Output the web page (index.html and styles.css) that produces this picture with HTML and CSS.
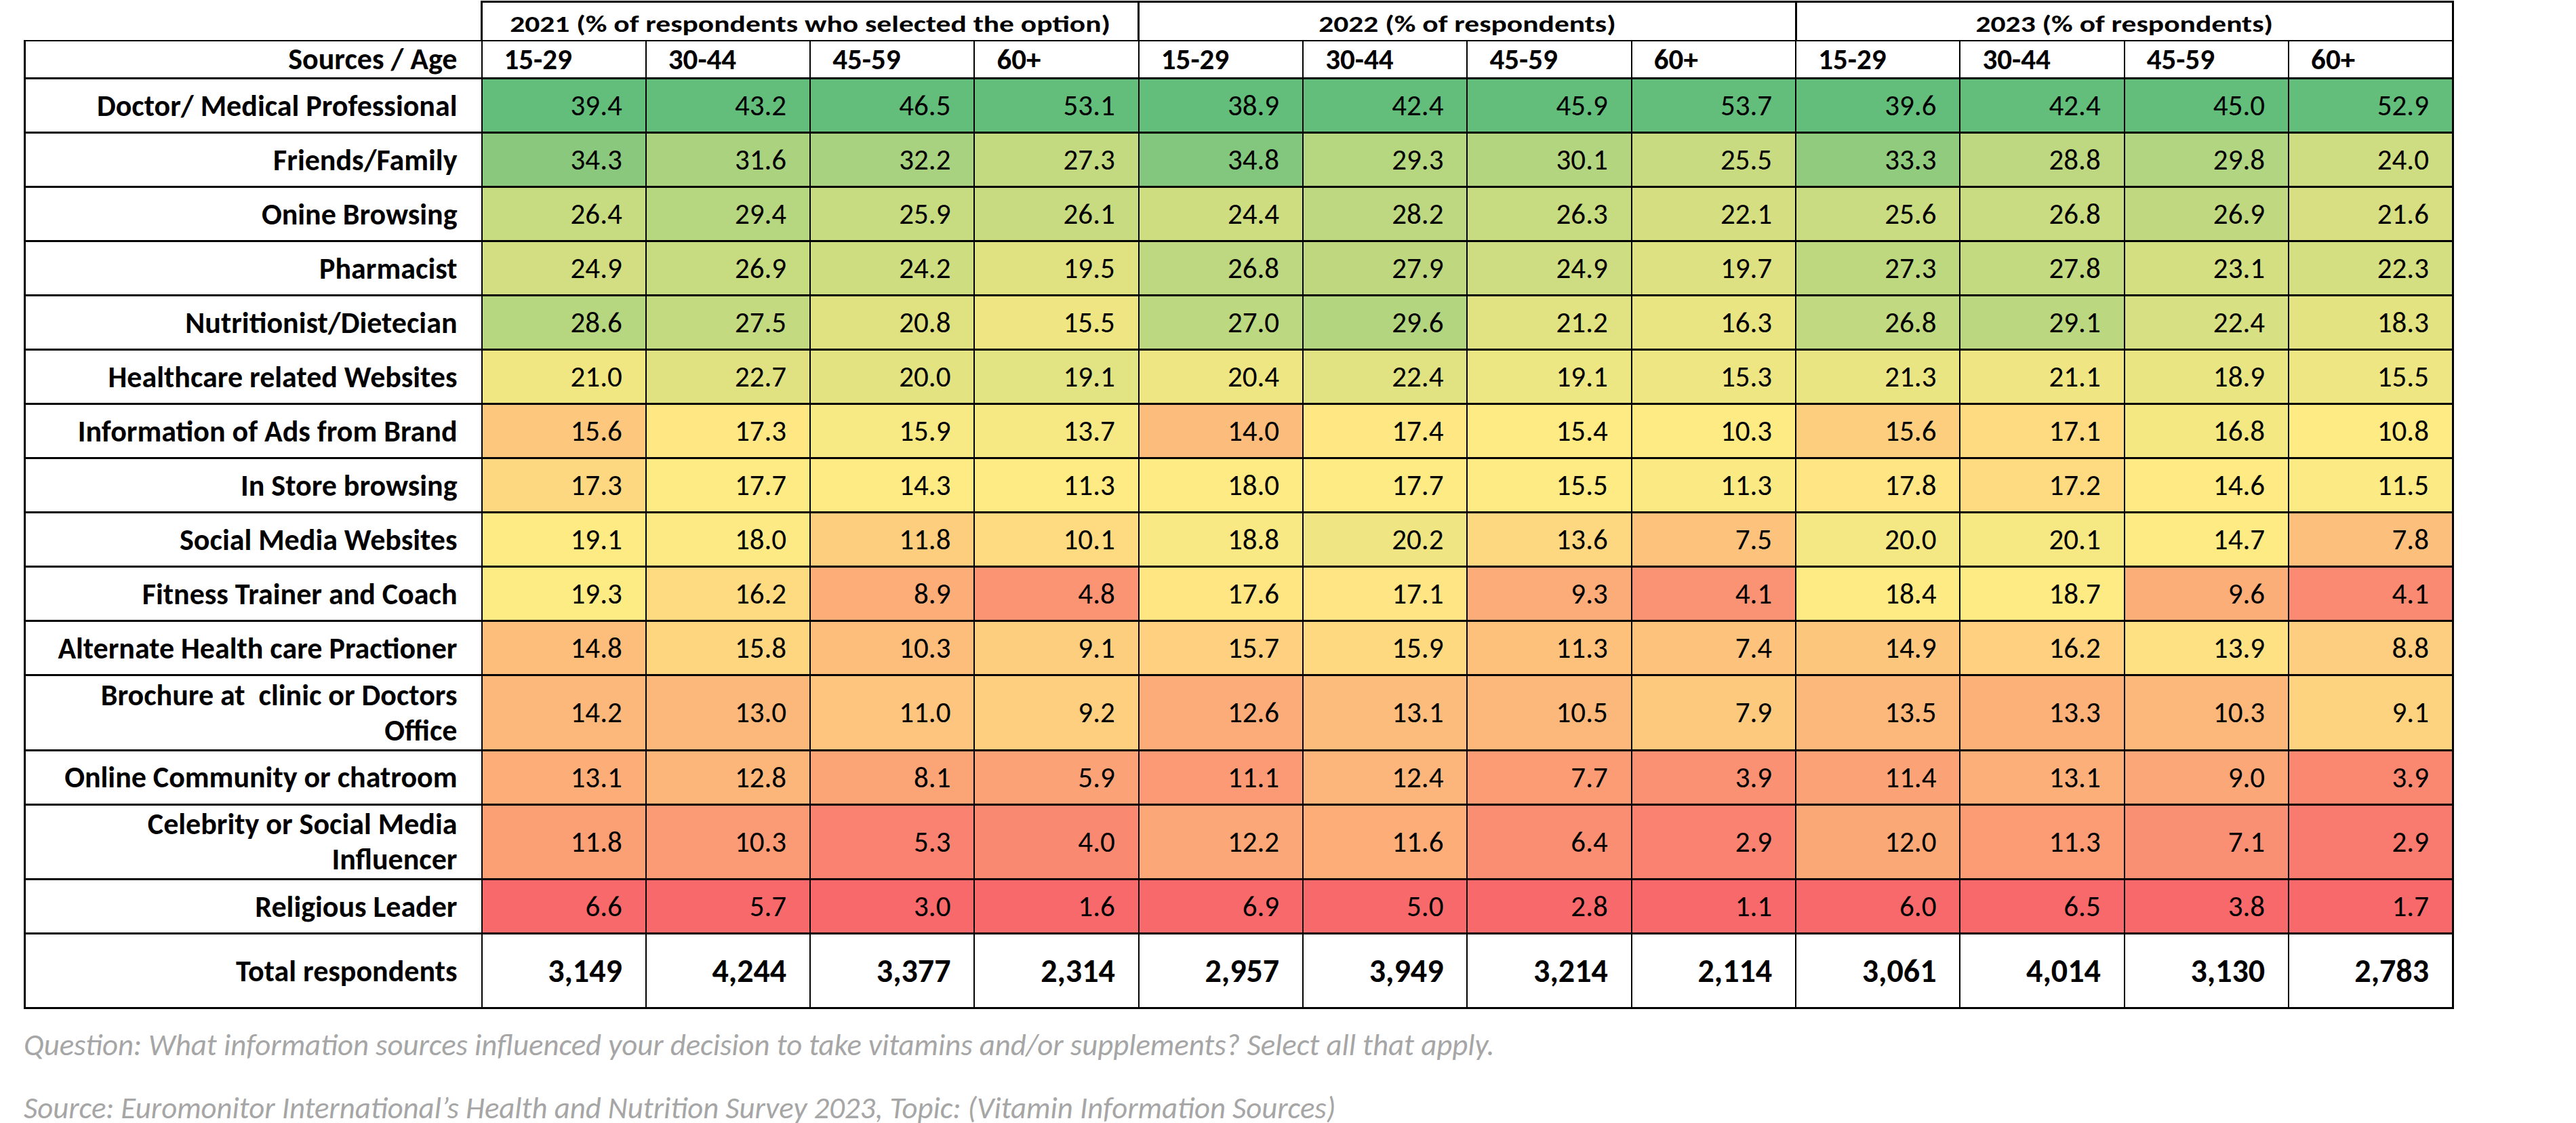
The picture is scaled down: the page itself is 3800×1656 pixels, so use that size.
FILE: index.html
```html
<!DOCTYPE html>
<html lang="en">
<head>
<meta charset="utf-8">
<title>Vitamin Information Sources</title>
<link rel="stylesheet" href="styles.css">
</head>
<body>
<div class="sheet">
  <table class="grid">
    <colgroup>
      <col class="c-lbl">
      <col><col><col><col>
      <col><col><col><col>
      <col><col><col><col>
    </colgroup>
    <thead>
      <tr class="yr">
        <th class="blank"></th>
        <th class="year" colspan="4"><span class="yt">2021 (% of respondents who selected the option)</span></th>
        <th class="year" colspan="4"><span class="yt">2022 (% of respondents)</span></th>
        <th class="year" colspan="4"><span class="yt">2023 (% of respondents)</span></th>
      </tr>
      <tr class="ages">
        <th class="lbl">Sources / Age</th>
        <th>15-29</th><th>30-44</th><th>45-59</th><th>60+</th>
        <th>15-29</th><th>30-44</th><th>45-59</th><th>60+</th>
        <th>15-29</th><th>30-44</th><th>45-59</th><th>60+</th>
      </tr>
    </thead>
    <tbody>
      <tr class="r"><th class="lbl">Doctor/ Medical Professional</th>
        <td class="v">39.4</td><td class="v">43.2</td><td class="v">46.5</td><td class="v">53.1</td>
        <td class="v">38.9</td><td class="v">42.4</td><td class="v">45.9</td><td class="v">53.7</td>
        <td class="v">39.6</td><td class="v">42.4</td><td class="v">45.0</td><td class="v">52.9</td></tr>
      <tr class="r"><th class="lbl">Friends/Family</th>
        <td class="v">34.3</td><td class="v">31.6</td><td class="v">32.2</td><td class="v">27.3</td>
        <td class="v">34.8</td><td class="v">29.3</td><td class="v">30.1</td><td class="v">25.5</td>
        <td class="v">33.3</td><td class="v">28.8</td><td class="v">29.8</td><td class="v">24.0</td></tr>
      <tr class="r"><th class="lbl">Onine Browsing</th>
        <td class="v">26.4</td><td class="v">29.4</td><td class="v">25.9</td><td class="v">26.1</td>
        <td class="v">24.4</td><td class="v">28.2</td><td class="v">26.3</td><td class="v">22.1</td>
        <td class="v">25.6</td><td class="v">26.8</td><td class="v">26.9</td><td class="v">21.6</td></tr>
      <tr class="r"><th class="lbl">Pharmacist</th>
        <td class="v">24.9</td><td class="v">26.9</td><td class="v">24.2</td><td class="v">19.5</td>
        <td class="v">26.8</td><td class="v">27.9</td><td class="v">24.9</td><td class="v">19.7</td>
        <td class="v">27.3</td><td class="v">27.8</td><td class="v">23.1</td><td class="v">22.3</td></tr>
      <tr class="r"><th class="lbl">Nutritionist/Dietecian</th>
        <td class="v">28.6</td><td class="v">27.5</td><td class="v">20.8</td><td class="v">15.5</td>
        <td class="v">27.0</td><td class="v">29.6</td><td class="v">21.2</td><td class="v">16.3</td>
        <td class="v">26.8</td><td class="v">29.1</td><td class="v">22.4</td><td class="v">18.3</td></tr>
      <tr class="r"><th class="lbl">Healthcare related Websites</th>
        <td class="v">21.0</td><td class="v">22.7</td><td class="v">20.0</td><td class="v">19.1</td>
        <td class="v">20.4</td><td class="v">22.4</td><td class="v">19.1</td><td class="v">15.3</td>
        <td class="v">21.3</td><td class="v">21.1</td><td class="v">18.9</td><td class="v">15.5</td></tr>
      <tr class="r"><th class="lbl">Information of Ads from Brand</th>
        <td class="v">15.6</td><td class="v">17.3</td><td class="v">15.9</td><td class="v">13.7</td>
        <td class="v">14.0</td><td class="v">17.4</td><td class="v">15.4</td><td class="v">10.3</td>
        <td class="v">15.6</td><td class="v">17.1</td><td class="v">16.8</td><td class="v">10.8</td></tr>
      <tr class="r"><th class="lbl">In Store browsing</th>
        <td class="v">17.3</td><td class="v">17.7</td><td class="v">14.3</td><td class="v">11.3</td>
        <td class="v">18.0</td><td class="v">17.7</td><td class="v">15.5</td><td class="v">11.3</td>
        <td class="v">17.8</td><td class="v">17.2</td><td class="v">14.6</td><td class="v">11.5</td></tr>
      <tr class="r"><th class="lbl">Social Media Websites</th>
        <td class="v">19.1</td><td class="v">18.0</td><td class="v">11.8</td><td class="v">10.1</td>
        <td class="v">18.8</td><td class="v">20.2</td><td class="v">13.6</td><td class="v">7.5</td>
        <td class="v">20.0</td><td class="v">20.1</td><td class="v">14.7</td><td class="v">7.8</td></tr>
      <tr class="r"><th class="lbl">Fitness Trainer and Coach</th>
        <td class="v">19.3</td><td class="v">16.2</td><td class="v">8.9</td><td class="v">4.8</td>
        <td class="v">17.6</td><td class="v">17.1</td><td class="v">9.3</td><td class="v">4.1</td>
        <td class="v">18.4</td><td class="v">18.7</td><td class="v">9.6</td><td class="v">4.1</td></tr>
      <tr class="r"><th class="lbl">Alternate Health care Practioner</th>
        <td class="v">14.8</td><td class="v">15.8</td><td class="v">10.3</td><td class="v">9.1</td>
        <td class="v">15.7</td><td class="v">15.9</td><td class="v">11.3</td><td class="v">7.4</td>
        <td class="v">14.9</td><td class="v">16.2</td><td class="v">13.9</td><td class="v">8.8</td></tr>
      <tr class="r tall"><th class="lbl">Brochure at&nbsp; clinic or Doctors<br>Office</th>
        <td class="v">14.2</td><td class="v">13.0</td><td class="v">11.0</td><td class="v">9.2</td>
        <td class="v">12.6</td><td class="v">13.1</td><td class="v">10.5</td><td class="v">7.9</td>
        <td class="v">13.5</td><td class="v">13.3</td><td class="v">10.3</td><td class="v">9.1</td></tr>
      <tr class="r"><th class="lbl">Online Community or chatroom</th>
        <td class="v">13.1</td><td class="v">12.8</td><td class="v">8.1</td><td class="v">5.9</td>
        <td class="v">11.1</td><td class="v">12.4</td><td class="v">7.7</td><td class="v">3.9</td>
        <td class="v">11.4</td><td class="v">13.1</td><td class="v">9.0</td><td class="v">3.9</td></tr>
      <tr class="r tall"><th class="lbl">Celebrity or Social Media<br>Influencer</th>
        <td class="v">11.8</td><td class="v">10.3</td><td class="v">5.3</td><td class="v">4.0</td>
        <td class="v">12.2</td><td class="v">11.6</td><td class="v">6.4</td><td class="v">2.9</td>
        <td class="v">12.0</td><td class="v">11.3</td><td class="v">7.1</td><td class="v">2.9</td></tr>
      <tr class="r"><th class="lbl">Religious Leader</th>
        <td class="v">6.6</td><td class="v">5.7</td><td class="v">3.0</td><td class="v">1.6</td>
        <td class="v">6.9</td><td class="v">5.0</td><td class="v">2.8</td><td class="v">1.1</td>
        <td class="v">6.0</td><td class="v">6.5</td><td class="v">3.8</td><td class="v">1.7</td></tr>
      <tr class="tot"><th class="lbl">Total respondents</th>
        <td>3,149</td><td>4,244</td><td>3,377</td><td>2,314</td>
        <td>2,957</td><td>3,949</td><td>3,214</td><td>2,114</td>
        <td>3,061</td><td>4,014</td><td>3,130</td><td>2,783</td></tr>
    </tbody>
  </table>
  <p class="note note-q">Question: What information sources influenced your decision to take vitamins and/or supplements? Select all that apply.</p>
  <p class="note note-s">Source: Euromonitor International’s Health and Nutrition Survey 2023, Topic: (Vitamin Information Sources)</p>
</div>
<script src="app.js"></script>
</body>
</html>
```

FILE: styles.css
```css
* { box-sizing: border-box; }

html, body {
  margin: 0;
  background: #ffffff;
}

body {
  font-family: Carlito, Calibri, "Liberation Sans Narrow", "Liberation Sans", sans-serif;
  color: #000000;
}

.sheet {
  padding: 1px 0 0 35px;
}

.grid {
  border-collapse: collapse;
  table-layout: fixed;
  width: 3585px;
}

.grid .c-lbl { width: 674px; }

.grid th,
.grid td {
  padding: 0;
  border-style: solid;
  border-color: #000000;
  border-width: 3px 2px;
  vertical-align: middle;
  line-height: 1;
  white-space: nowrap;
}

/* year row */
.yr { height: 57px; }

.grid th.blank {
  border: none;
}

.grid th.year {
  font-size: 43.5px;
  font-weight: 700;
  text-align: center;
  vertical-align: bottom;
  padding-bottom: 4px;
  border-top-width: 3px;
  border-bottom-width: 2px;
  border-left-width: 3px;
  border-right-width: 3px;
}

.yt {
  display: inline-block;
  transform: scaleY(0.8);
  transform-origin: 50% 84%;
}

/* age row */
.ages { height: 56px; }

.ages th {
  border-top-width: 2px;
  font-size: 43px;
  font-weight: 700;
  text-align: left;
  padding: 0 0 0 32px;
}

/* labels */
.grid th.lbl {
  font-size: 44px;
  font-weight: 700;
  text-align: right;
  padding: 0 35px 0 0;
  border-left-width: 3px;
}

/* data */
.r { height: 80px; }
.r.tall { height: 110.5px; }

.tall .lbl {
  white-space: normal;
}

.grid .tall th.lbl {
  line-height: 52px;
}

.grid td.v {
  font-size: 43px;
  text-align: right;
  padding: 0 34px 0 0;
}

/* totals */
.tot { height: 110px; }

.grid .tot td {
  font-size: 48px;
  font-weight: 700;
  text-align: right;
  padding: 0 34px 0 0;
}

.grid tr > :last-child { border-right-width: 3px; }

/* footnotes */
.note {
  margin: 0;
  font-size: 44.75px;
  line-height: 54px;
  font-style: italic;
  color: #a6a6a6;
  white-space: nowrap;
}

.note-q { margin-top: 26px; }
.note-s { margin-top: 39px; }
```

FILE: app.js
```js
(function () {
  var MIN = [248, 105, 107];
  var MID = [255, 235, 132];
  var MAX = [99, 190, 123];

  var cols = [];
  var rows = document.querySelectorAll('tr.r');
  Array.prototype.forEach.call(rows, function (tr) {
    var cells = tr.querySelectorAll('td.v');
    Array.prototype.forEach.call(cells, function (td, i) {
      (cols[i] = cols[i] || []).push(td);
    });
  });

  function pct(s, p) {
    var k = (s.length - 1) * p;
    var f = Math.floor(k);
    var c = Math.ceil(k);
    return s[f] + (s[c] - s[f]) * (k - f);
  }

  function mix(a, b, t) {
    return a.map(function (x, j) { return Math.round(x + (b[j] - x) * t); });
  }

  cols.forEach(function (cells) {
    var vals = cells.map(function (td) { return parseFloat(td.textContent); });
    var s = vals.slice().sort(function (a, b) { return a - b; });
    var lo = s[0];
    var hi = s[s.length - 1];
    var mid = pct(s, 0.5);
    cells.forEach(function (td, i) {
      var v = vals[i];
      var c;
      if (v <= mid) {
        c = mix(MIN, MID, mid === lo ? 1 : (v - lo) / (mid - lo));
      } else {
        c = mix(MID, MAX, (v - mid) / (hi - mid));
      }
      td.style.backgroundColor = 'rgb(' + c.join(',') + ')';
    });
  });
})();
```
